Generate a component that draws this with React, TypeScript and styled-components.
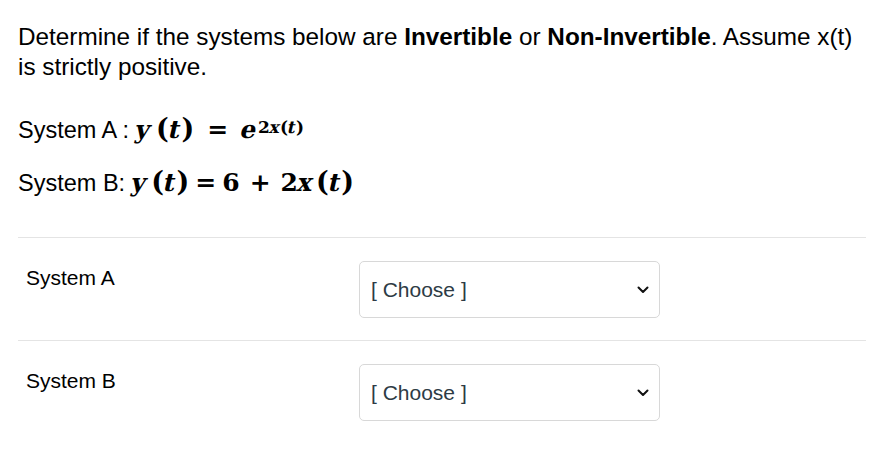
import React from 'react';
import styled, { createGlobalStyle } from 'styled-components';

const GlobalStyle = createGlobalStyle`
  html, body {
    margin: 0;
    padding: 0;
    background: #ffffff;
  }
  body {
    font-family: "Liberation Sans", Arial, sans-serif;
    color: #000000;
  }
`;

const Page = styled.div`
  width: 878px;
  padding: 22px 12px 0 18px;
  box-sizing: border-box;
`;

const Para = styled.p`
  margin: 0 0 20px 0;
  font-size: 24.3px;
  line-height: 30px;
`;

const MathLine = styled.p`
  margin: 0;
  height: 53px;
  font-size: 23.5px;
  line-height: 53px;
  display: flex;
  align-items: baseline;
  white-space: pre;
`;

// bold italic math variable (slanted DejaVu Serif Bold)
const Mv = styled.span<{ $r?: number }>`
  display: inline-block;
  font-family: "DejaVu Serif", "Liberation Serif", serif;
  font-weight: bold;
  font-size: 25px;
  transform: skewX(-13deg);
  margin-right: ${p => p.$r ?? 0}px;
`;

const Mn = styled.span<{ $gap?: number }>`
  font-family: "DejaVu Serif", "Liberation Serif", serif;
  font-weight: bold;
  font-size: 25px;
  margin: 0 ${p => p.$gap ?? 0}px;
`;

const Paren = styled.span<{ $l?: number }>`
  font-family: "DejaVu Serif", "Liberation Serif", serif;
  font-weight: bold;
  font-size: 27px;
  margin-left: ${p => p.$l ?? 0}px;
`;

const Sup = styled.sup`
  display: inline-flex;
  align-items: baseline;
  font-family: "DejaVu Serif", "Liberation Serif", serif;
  font-weight: bold;
  font-size: 17px;
  line-height: 0;
  position: relative;
  top: -5px;
  margin-left: 1px;
`;

const SupV = styled.span`
  display: inline-block;
  transform: skewX(-13deg);
`;

const Section = styled.div`
  margin-top: 29px;
  border-top: 1px solid #e4e4e4;
`;

const Row = styled.div`
  display: flex;
  align-items: flex-start;
  padding: 23px 0 22px 8px;
  border-bottom: 1px solid #e4e4e4;
  &:last-child {
    border-bottom: none;
  }
`;

const Label = styled.div`
  width: 333px;
  font-size: 21px;
  line-height: 34px;
`;

const SelectBox = styled.div`
  width: 301px;
  height: 57px;
  box-sizing: border-box;
  border: 1px solid #d8d8d8;
  border-radius: 5px;
  display: flex;
  align-items: center;
  justify-content: space-between;
  padding: 0 10px 0 11px;
  font-size: 21px;
  color: #2d3b45;
`;

const Chevron = () => (
  <svg width="12" height="8" viewBox="0 0 12 8">
    <path d="M1.5 1.5 L6 6 L10.5 1.5" fill="none" stroke="#111" strokeWidth="2" strokeLinecap="round" strokeLinejoin="round" />
  </svg>
);

const Select = () => (
  <SelectBox>
    <span>[ Choose ]</span>
    <Chevron />
  </SelectBox>
);

export default function App() {
  return (
    <Page>
      <GlobalStyle />
      <Para>
        Determine if the systems below are <b>Invertible</b> or <b>Non-Invertible</b>. Assume x(t) is strictly positive.
      </Para>
      <MathLine>
        System A : <Mv $r={2}>y</Mv>
        <Paren $l={4}>(</Paren><Mv $r={1}>t</Mv><Paren>)</Paren>
        <Mn $gap={13}>=</Mn>
        <Mv>e</Mv>
        <Sup>2<SupV>x</SupV>(<SupV>t</SupV>)</Sup>
      </MathLine>
      <MathLine>
        System B: <Mv>y</Mv>
        <Paren $l={5}>(</Paren><Mv $r={1}>t</Mv><Paren>)</Paren>
        <Mn $gap={6}>=</Mn>
        <Mn>6</Mn>
        <Mn $gap={10}>+</Mn>
        <Mn>2</Mn><Mv>x</Mv>
        <Paren $l={3}>(</Paren><Mv $r={1}>t</Mv><Paren>)</Paren>
      </MathLine>
      <Section>
        <Row>
          <Label>System A</Label>
          <Select />
        </Row>
        <Row>
          <Label>System B</Label>
          <Select />
        </Row>
      </Section>
    </Page>
  );
}
